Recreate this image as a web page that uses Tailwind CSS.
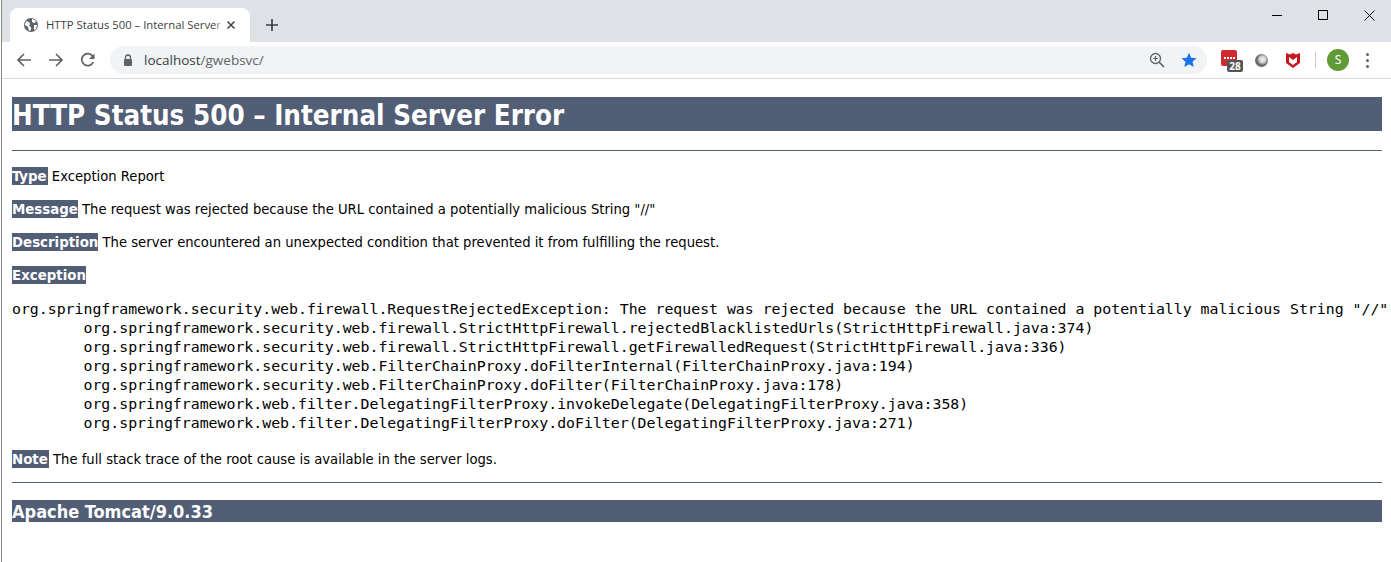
<!DOCTYPE html>
<html><head><meta charset="utf-8"><script src="https://cdn.jsdelivr.net/npm/@tailwindcss/browser@4"></script><title>HTTP Status 500</title></head>
<body class="bg-white overflow-hidden">
<div class="ml-[1px] w-[1390px] h-[562px] border-l border-[#8a8a8a] overflow-hidden flex flex-col font-['Noto_Sans',sans-serif]">
  <div class="h-[42px] bg-[#dee1e6] flex shrink-0 -ml-[2px] pl-[10px] relative">
    <div class="mt-[8px] w-[240px] h-[34px] bg-white rounded-t-[8px] flex items-center pl-[13px] pr-[10px]">
      <svg class="w-[16px] h-[16px] shrink-0" viewBox="0 0 16 16"><circle cx="8" cy="8" r="7" fill="#5f6368"/><path d="M3 4l3 1 1 2-1 2 2 1v3l-2 1-1-4-3-2zM9 2l3 1 1 2-2 1-2-1zM11 8l3 0-1 4-2 1z" fill="#fff"/></svg>
      <span class="relative ml-[7px] w-[178px] overflow-hidden whitespace-nowrap text-[11.300px] leading-[16px] text-[#3c4043] font-['Open_Sans',sans-serif]">HTTP Status 500 – Internal Server<span class="absolute right-0 top-0 w-[10px] h-[16px] bg-gradient-to-r from-white/0 to-white"></span></span>
      <svg class="w-[10px] h-[10px] ml-[2px] shrink-0" viewBox="0 0 10 10"><path d="M1.500 1.500l7 7M8.500 1.500l-7 7" stroke="#3c4043" stroke-width="1.500"/></svg>
    </div>
    <svg class="w-[14px] h-[14px] mt-[18px] ml-[15px]" viewBox="0 0 14 14"><path d="M7 1v12M1 7h12" stroke="#3c4043" stroke-width="1.700"/></svg>
    <div class="absolute -right-[1px] top-0 h-[30px] flex items-center">
      <div class="w-[46px] flex justify-center"><div class="w-[10px] h-px bg-black"></div></div>
      <div class="w-[46px] flex justify-center"><div class="w-[10px] h-[10px] border border-black"></div></div>
      <div class="w-[46px] flex justify-center"><svg class="w-[11px] h-[11px]" viewBox="0 0 11 11"><path d="M.5.5l10 10M10.500.5l-10 10" stroke="#111" fill="none"/></svg></div>
    </div>
  </div>
  <div class="h-[37px] bg-white border-b border-[#d8d9db] flex items-center shrink-0 -ml-[2px] pl-[16px] pr-[13px]">
    <svg class="w-[16px] h-[16px] shrink-0" viewBox="0 0 16 16"><path d="M15 8H2M8 2L2 8l6 6" stroke="#5f6368" stroke-width="1.700" fill="none"/></svg>
    <svg class="w-[16px] h-[16px] shrink-0 ml-[16px]" viewBox="0 0 16 16"><path d="M1 8h13M8 2l6 6-6 6" stroke="#5f6368" stroke-width="1.700" fill="none"/></svg>
    <svg class="w-[16px] h-[16px] shrink-0 ml-[16px]" viewBox="0 0 16 16"><path d="M13.300 10A6 6 0 1 1 12.500 4L14 5.500" stroke="#5f6368" stroke-width="1.700" fill="none"/><path d="M14.500 1.500v5.500H9z" fill="#5f6368"/></svg>
    <div class="ml-[14px] w-[1097px] h-[28px] rounded-full bg-[#f1f3f4] flex items-center pl-[13px] pr-[10px] shrink-0">
      <svg class="w-[10px] h-[13px] shrink-0" viewBox="0 0 10 13"><path d="M2.500 5V3.500a2.500 2.500 0 0 1 5 0V5" stroke="#5f6368" stroke-width="1.300" fill="none"/><rect x="1" y="5" width="8" height="7" rx="1" fill="#5f6368"/></svg>
      <span class="ml-[11px] text-[13.500px] text-[#3c4043] font-['Open_Sans',sans-serif]">localhost<span class="text-[#5f6368]">/gwebsvc/</span></span>
      <svg class="w-[16px] h-[16px] ml-auto shrink-0" viewBox="0 0 16 16"><circle cx="6.500" cy="6.500" r="5" stroke="#5f6368" stroke-width="1.300" fill="none"/><path d="M10 10l5 5" stroke="#5f6368" stroke-width="1.700"/><path d="M4 6.500h5M6.500 4v5" stroke="#5f6368" stroke-width="1.200"/></svg>
      <svg class="w-[16px] h-[16px] ml-[16px] shrink-0" viewBox="0 0 16 16"><path d="M8 .8l2.200 4.900 5.300.5-4 3.500 1.200 5.200L8 12.200l-4.700 2.700 1.200-5.200-4-3.500 5.300-.5z" fill="#1a73e8"/></svg>
    </div>
    <div class="relative ml-[14px] w-[16px] h-[16px] bg-[#cf2a30] rounded-[2px] shrink-0 flex items-center justify-center gap-[1px] -mt-[4px]">
      <i class="w-[2px] h-[2px] bg-white"></i><i class="w-[2px] h-[2px] bg-white"></i><i class="w-[2px] h-[2px] bg-white"></i><i class="w-[2px] h-[2px] bg-white"></i>
      <span class="absolute left-[6px] top-[10px] w-[16px] h-[12px] rounded-[2px] bg-[#555] text-white text-[10px] leading-[12px] font-bold text-center font-['Noto_Sans',sans-serif]">28</span>
    </div>
    <div class="ml-[18px] w-[13px] h-[13px] rounded-full bg-[radial-gradient(circle_at_58%_42%,#eee_0%,#d5d5d5_28%,#666_55%,#777_100%)] shrink-0"></div>
    <svg class="ml-[18px] w-[14px] h-[16px] shrink-0" viewBox="0 0 14 16"><path d="M0 1l4 1.500 3-1.500 3 1.500 4-1.500v10l-7 5-7-5z" fill="#c8171e"/><path d="M3 5l4 3 4-3v5l-4 3-4-3z" fill="#fff"/></svg>
    <div class="ml-[15px] w-px h-[16px] bg-[#ccc] shrink-0"></div>
    <div class="ml-[11px] w-[22px] h-[22px] rounded-full bg-[#5f9a35] text-white text-[12px] flex items-center justify-center shrink-0">S</div>
    <div class="ml-[17px] flex flex-col gap-[3px] shrink-0"><i class="w-[3px] h-[3px] rounded-full bg-[#5f6368]"></i><i class="w-[3px] h-[3px] rounded-full bg-[#5f6368]"></i><i class="w-[3px] h-[3px] rounded-full bg-[#5f6368]"></i></div>
  </div>
  <main class="pl-[10px] pr-[9px] pt-[18px] text-black text-[14.650px] font-['DejaVu_Sans_Condensed','DejaVu_Sans',sans-serif] [font-stretch:condensed]">
    <h1 class="h-[34px] bg-[#525d76] text-white text-[27.500px] leading-[37px] font-bold whitespace-nowrap">HTTP Status 500 – Internal Server Error</h1>
    <div class="mt-[19px] h-px bg-[#525d76]"></div>
    <p class="mt-[16px] h-[18px] leading-[18px] whitespace-nowrap"><b class="bg-[#525d76] text-white text-[14.850px] pr-[1px]">Type</b> Exception Report</p>
    <p class="mt-[15px] h-[18px] leading-[18px] whitespace-nowrap"><b class="bg-[#525d76] text-white text-[14.850px]">Message</b> The request was rejected because the URL contained a potentially malicious String "//"</p>
    <p class="mt-[15px] h-[18px] leading-[18px] whitespace-nowrap"><b class="bg-[#525d76] text-white text-[14.850px]">Description</b> The server encountered an unexpected condition that prevented it from fulfilling the request.</p>
    <p class="mt-[15px] h-[18px] leading-[18px] whitespace-nowrap"><b class="bg-[#525d76] text-white text-[14.850px]">Exception</b></p>
    <pre class="mt-[16px] text-[14.850px] leading-[19px] font-['DejaVu_Sans_Mono',monospace] [tab-size:8] [font-stretch:normal]">org.springframework.security.web.firewall.RequestRejectedException: The request was rejected because the URL contained a potentially malicious String "//"
	org.springframework.security.web.firewall.StrictHttpFirewall.rejectedBlacklistedUrls(StrictHttpFirewall.java:374)
	org.springframework.security.web.firewall.StrictHttpFirewall.getFirewalledRequest(StrictHttpFirewall.java:336)
	org.springframework.security.web.FilterChainProxy.doFilterInternal(FilterChainProxy.java:194)
	org.springframework.security.web.FilterChainProxy.doFilter(FilterChainProxy.java:178)
	org.springframework.web.filter.DelegatingFilterProxy.invokeDelegate(DelegatingFilterProxy.java:358)
	org.springframework.web.filter.DelegatingFilterProxy.doFilter(DelegatingFilterProxy.java:271)</pre>
    <p class="mt-[17px] h-[18px] leading-[18px] whitespace-nowrap"><b class="bg-[#525d76] text-white text-[14.850px] pr-[1px]">Note</b> The full stack trace of the root cause is available in the server logs.</p>
    <div class="mt-[14px] h-px bg-[#525d76]"></div>
    <h3 class="mt-[17px] h-[22px] bg-[#525d76] text-white text-[18px] leading-[23px] font-bold whitespace-nowrap">Apache Tomcat/9.0.33</h3>
  </main>
</div>
</body></html>
